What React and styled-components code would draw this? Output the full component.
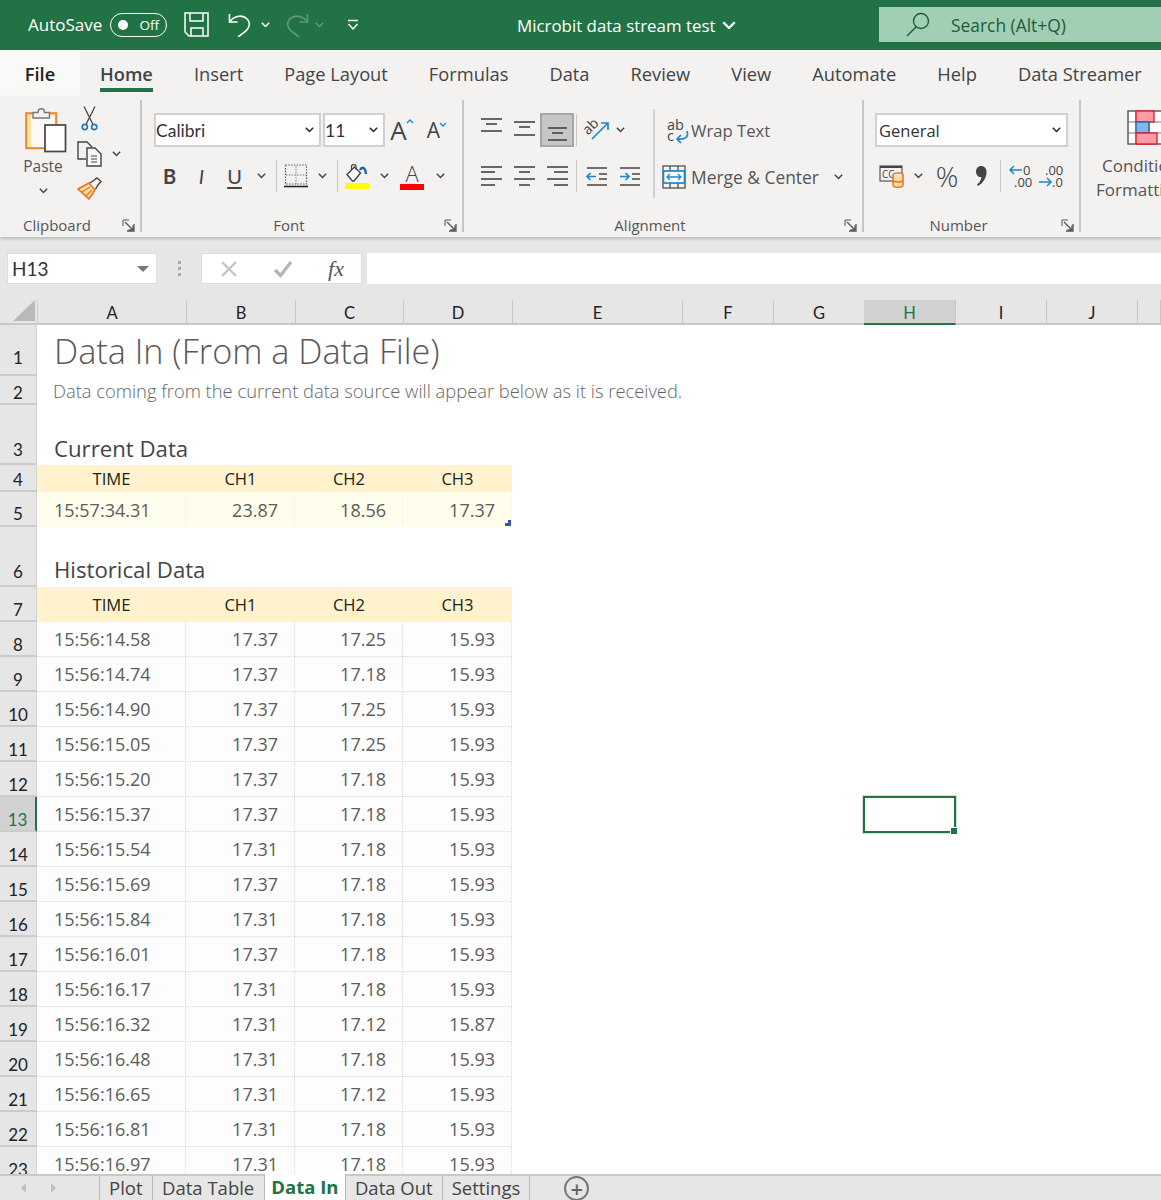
import React from "react";
import styled, { createGlobalStyle } from "styled-components";

const UI = `"Open Sans", "Noto Sans", sans-serif`;
const CALIBRI = `Lato, "Liberation Sans", sans-serif`;
const GREEN = "#217346";

const hist = [
  ["15:56:14.58", "17.37", "17.25", "15.93"],
  ["15:56:14.74", "17.37", "17.18", "15.93"],
  ["15:56:14.90", "17.37", "17.25", "15.93"],
  ["15:56:15.05", "17.37", "17.25", "15.93"],
  ["15:56:15.20", "17.37", "17.18", "15.93"],
  ["15:56:15.37", "17.37", "17.18", "15.93"],
  ["15:56:15.54", "17.31", "17.18", "15.93"],
  ["15:56:15.69", "17.37", "17.18", "15.93"],
  ["15:56:15.84", "17.31", "17.18", "15.93"],
  ["15:56:16.01", "17.37", "17.18", "15.93"],
  ["15:56:16.17", "17.31", "17.18", "15.93"],
  ["15:56:16.32", "17.31", "17.12", "15.87"],
  ["15:56:16.48", "17.31", "17.18", "15.93"],
  ["15:56:16.65", "17.31", "17.12", "15.93"],
  ["15:56:16.81", "17.31", "17.18", "15.93"],
  ["15:56:16.97", "17.31", "17.18", "15.93"],
];

const tabs = ["Insert", "Page Layout", "Formulas", "Data", "Review", "View", "Automate", "Help", "Data Streamer"];
const columns = ["A", "B", "C", "D", "E", "F", "G", "H", "I", "J", ""];
const headers = ["TIME", "CH1", "CH2", "CH3"];

const Chevron = ({ color = "#444", size = 9 }) => (
  <svg width={size} height={size * 0.62} viewBox="0 0 9 5.6">
    <path d="M0.8 0.8 L4.5 4.5 L8.2 0.8" fill="none" stroke={color} strokeWidth="1.5" />
  </svg>
);

const SaveIcon = () => (
  <svg width="25" height="25" viewBox="0 0 25 25" fill="none" stroke="#fff" strokeWidth="1.5">
    <path d="M1 1 H24 V24 H5 L1 20 Z" />
    <path d="M6 1 V9 H19 V1" />
    <path d="M7 24 V16 H19 V24" />
  </svg>
);

const UndoIcon = ({ color = "#fff" }) => (
  <svg width="23" height="25" viewBox="0 0 23 25" fill="none" stroke={color} strokeWidth="1.6">
    <path d="M1.5 2 V10 H9.5" />
    <path d="M1.5 10 C6 4 13 2.5 18 6 C23 10 22 15 18 19 L10 25" />
  </svg>
);

const RedoIcon = ({ color }) => (
  <svg width="23" height="25" viewBox="0 0 23 25" fill="none" stroke={color} strokeWidth="1.6">
    <path d="M21.5 2 V10 H13.5" />
    <path d="M21.5 10 C17 4 10 2.5 5 6 C0 10 1 15 5 19 L13 25" />
  </svg>
);

const CustomizeIcon = () => (
  <svg width="12" height="12" viewBox="0 0 12 12" fill="none" stroke="#fff" strokeWidth="1.5">
    <path d="M1 1.5 H11" />
    <path d="M1.5 5 L6 10 L10.5 5" />
  </svg>
);

const SearchIcon = () => (
  <svg width="24" height="25" viewBox="0 0 24 25" fill="none" stroke="#1d5c3a" strokeWidth="1.4">
    <circle cx="15" cy="9" r="7.5" />
    <path d="M10 15 L1 24" />
  </svg>
);

const PasteIcon = () => (
  <svg width="42" height="46" viewBox="0 0 42 46">
    <rect x="1.2" y="6.2" width="30" height="35" fill="#fbe3a8" stroke="#e68a2e" strokeWidth="2" />
    <rect x="6" y="9" width="24" height="31" fill="#faf9f8" />
    <path d="M8 11 V5.5 H13 C13 0.5 19.5 0.5 19.5 5.5 H24.5 V11 Z" fill="#f3f2f1" stroke="#777" strokeWidth="1.4" />
    <rect x="20" y="18" width="20.5" height="26.5" fill="#fff" stroke="#444" strokeWidth="1.7" />
  </svg>
);

const CutIcon = () => (
  <svg width="17" height="25" viewBox="0 0 17 25" fill="none">
    <path d="M3 0.5 L12 18.5 M14 0.5 L5 18.5" stroke="#444" strokeWidth="1.3" />
    <circle cx="3.8" cy="21" r="2.6" stroke="#1b7cc0" strokeWidth="1.6" />
    <circle cx="13.2" cy="21" r="2.6" stroke="#1b7cc0" strokeWidth="1.6" />
  </svg>
);

const CopyIcon = () => (
  <svg width="25" height="26" viewBox="0 0 25 26" fill="none" stroke="#444" strokeWidth="1.4">
    <path d="M9 18 H1 V1 H10 L15 6" />
    <path d="M10 7 H18 L24 13 V25 H10 Z" fill="#f8f8f8" />
    <path d="M14 15 H20 M14 18 H20 M14 21 H20" strokeWidth="1.1" />
  </svg>
);

const BrushIcon = () => (
  <svg width="25" height="23" viewBox="0 0 25 23" fill="none">
    <path d="M1 12 L12 6 L18 13 L12 22 Z" fill="#fbd9a6" stroke="#e4761c" strokeWidth="1.6" />
    <path d="M5 15 L13 10 M9 19 L15 13" stroke="#e4761c" strokeWidth="1.2" />
    <path d="M13 6 L16 4 L20 1 L24 4.5 L21 8 L18.5 12" fill="#f3f2f1" stroke="#444" strokeWidth="1.4" />
  </svg>
);

const BordersIcon = () => (
  <svg width="24" height="24" viewBox="0 0 24 24" fill="none">
    <rect x="1.5" y="1" width="21" height="19" stroke="#555" strokeWidth="1.2" strokeDasharray="1.4 1.4" />
    <path d="M12 2 V20 M2 11 H22" stroke="#777" strokeWidth="1" strokeDasharray="1.4 1.4" />
    <path d="M0 22.5 H24" stroke="#222" strokeWidth="1.6" />
  </svg>
);

const BucketIcon = () => (
  <svg width="24" height="18" viewBox="0 0 24 18" fill="none">
    <path d="M2 10.5 L9.5 3 L15.5 9 L9 17 H7.5 Z" fill="#fff" stroke="#444" strokeWidth="1.4" />
    <path d="M6.5 6 V2.5 C6.5 0 11 0 11 2.5 V6" stroke="#444" strokeWidth="1.2" />
    <path d="M15 6 C17 2.5 20.5 3 21 10" stroke="#1b63ab" strokeWidth="2.4" />
  </svg>
);

const Lines = ({ rows }) => (
  <svg width="24" height="24" viewBox="0 0 24 24" stroke="#444" strokeWidth="1.6">
    {rows.map(([x1, x2, y]) => (
      <path key={`${x1}-${y}`} d={`M${x1} ${y} H${x2}`} />
    ))}
  </svg>
);

const OrientIcon = () => (
  <svg width="26" height="24" viewBox="0 0 26 24" fill="none" overflow="visible">
    <text x="7" y="13" textAnchor="middle" transform="rotate(-45 7 9)" fontSize="14" fontFamily={UI} fill="#444">ab</text>
    <path d="M8 21 L24 5 M17 5 H24 V12" stroke="#1b87d0" strokeWidth="1.7" />
  </svg>
);

const IndentIcon = ({ flip }) => (
  <svg width="24" height="24" viewBox="0 0 24 24" fill="none">
    <path d="M2 4 H22 M2 21 H22" stroke="#444" strokeWidth="1.6" />
    <path d="M14 10 H22 M14 15 H22" stroke="#444" strokeWidth="1.6" />
    {flip ? (
      <path d="M2 12.5 H11 M7.5 9 L11 12.5 L7.5 16" stroke="#1b87d0" strokeWidth="1.7" />
    ) : (
      <path d="M11 12.5 H2 M5.5 9 L2 12.5 L5.5 16" stroke="#1b87d0" strokeWidth="1.7" />
    )}
  </svg>
);

const WrapIcon = () => (
  <svg width="24" height="26" viewBox="0 0 24 26" fill="none" overflow="visible">
    <text x="0" y="13" fontSize="14.5" fontFamily={UI} fill="#444">ab</text>
    <text x="0" y="24" fontSize="14.5" fontFamily={UI} fill="#444">c</text>
    <path d="M20 14 C22 20 18 23 10 22 M14 18 L10 22 L14 26" stroke="#1b87d0" strokeWidth="1.7" />
  </svg>
);

const MergeIcon = () => (
  <svg width="24" height="24" viewBox="0 0 24 24" fill="none">
    <rect x="1" y="1" width="22" height="22" stroke="#444" strokeWidth="1.2" />
    <path d="M8 1 V6 M16 1 V6 M8 18 V23 M16 18 V23" stroke="#444" strokeWidth="1.2" />
    <rect x="1.5" y="6" width="21" height="12" fill="#fff" stroke="#1b87d0" strokeWidth="1.7" />
    <path d="M5 12 H19 M8 9 L5 12 L8 15 M16 9 L19 12 L16 15" stroke="#1b87d0" strokeWidth="1.3" />
  </svg>
);

const CurrencyIcon = () => (
  <svg width="26" height="24" viewBox="0 0 26 24" fill="none">
    <rect x="1" y="2" width="22" height="15" fill="#f3f2f1" stroke="#555" strokeWidth="1.2" />
    <path d="M1 3 H23" stroke="#444" strokeWidth="2" />
    <text x="3" y="14" fontSize="10" fontFamily={UI} fill="#444">CC</text>
    <ellipse cx="19" cy="11" rx="5" ry="2" fill="#f3f2f1" stroke="#e4761c" strokeWidth="1.5" />
    <path d="M14 11 V21 C14 24 24 24 24 21 V11 M14 16 C14 18.5 24 18.5 24 16" fill="#fbd9a6" stroke="#e4761c" strokeWidth="1.5" />
  </svg>
);

const CommaIcon = () => (
  <svg width="12" height="22" viewBox="0 0 12 22">
    <path d="M6 1 C9.5 1 11.5 3.5 11.5 7 C11.5 13 8 18 3 21 L2 19.5 C4.5 17.5 6 15 6.5 12 C3.5 12.5 1 10 1 6.5 C1 3.5 3 1 6 1 Z" fill="#444" />
  </svg>
);

const DecimalIcon = ({ more }) => (
  <svg width="24" height="24" viewBox="0 0 24 24" fill="none" overflow="visible">
    <text x={more ? 6 : 14} y="11" fontSize="13" fontFamily={UI} fill="#444">{more ? ".00" : "0"}</text>
    <text x={more ? 13 : 5} y="23" fontSize="13" fontFamily={UI} fill="#444">{more ? ".0" : ".00"}</text>
    {more ? (
      <path d="M0 18 H12 M8 14 L12 18 L8 22" stroke="#1b87d0" strokeWidth="1.5" />
    ) : (
      <path d="M13 6 H1 M5 2 L1 6 L5 10" stroke="#1b87d0" strokeWidth="1.5" />
    )}
  </svg>
);

const CondFormatIcon = () => (
  <svg width="36" height="36" viewBox="0 0 36 36" fill="none">
    <rect x="1" y="1" width="34" height="33" fill="#fff" stroke="#555" strokeWidth="1.4" />
    <path d="M1 12 H35 M1 23 H35 M9 1 V34 M22 1 V34" stroke="#777" strokeWidth="1" />
    <rect x="9" y="1" width="18" height="11" fill="#ff9aa6" stroke="#e81123" strokeWidth="1.3" />
    <rect x="9" y="12" width="13" height="11" fill="#7fb9ea" stroke="#1b63ab" strokeWidth="1.3" />
    <rect x="9" y="23" width="21" height="11" fill="#ff9aa6" stroke="#e81123" strokeWidth="1.3" />
  </svg>
);

const LauncherIcon = () => (
  <svg width="13" height="13" viewBox="0 0 13 13" fill="none" stroke="#555" strokeWidth="1.3">
    <path d="M12 5 V12 H5" />
    <path d="M7 1 H1 V7" strokeWidth="1" />
    <path d="M3 3 L11 11 M6.5 11 H11 V6.5" />
  </svg>
);

const NameArrow = styled.span`
  width: 0;
  height: 0;
  border-left: 6px solid transparent;
  border-right: 6px solid transparent;
  border-top: 6px solid #777;
`;

const GlobalStyle = createGlobalStyle`
  html, body { margin: 0; padding: 0; background: #fff; }
  body { font-family: ${UI}; }
  #root { width: 1161px; height: 1200px; }
`;

const Page = styled.div`
  width: 1161px;
  height: 1200px;
  overflow: hidden;
  display: flex;
  flex-direction: column;
  background: #fff;
`;

const TitleBar = styled.header`
  flex: 0 0 50px;
  display: flex;
  align-items: center;
  background: ${GREEN};
  color: #fff;
  padding-left: 28px;
  border-bottom: 1px solid #1d6a40;
  box-sizing: border-box;
`;

const AutoSave = styled.span`
  font-size: 17px;
  width: 82px;
`;

const Toggle = styled.span`
  width: 57px;
  height: 24px;
  box-sizing: border-box;
  border: 1.5px solid #fff;
  border-radius: 12px;
  display: flex;
  align-items: center;
  justify-content: space-between;
  padding: 0 7px 0 7px;
  font-size: 13.5px;
  margin-right: 17px;
  &::before {
    content: "";
    width: 10px;
    height: 10px;
    border-radius: 50%;
    background: #fff;
  }
`;

const BarSlot = styled.span`
  display: flex;
  align-items: center;
  justify-content: center;
  width: ${(p) => p.$w}px;
  margin-left: ${(p) => p.$ml || 0}px;
`;

const DocTitle = styled.span`
  display: flex;
  align-items: center;
  gap: 6px;
  font-size: 16.9px;
  margin-left: 156px;
  padding-top: 1px;
`;

const SearchBox = styled.div`
  width: 282px;
  height: 35px;
  margin-left: auto;
  display: flex;
  align-items: center;
  gap: 21px;
  padding-left: 27px;
  box-sizing: border-box;
  background: #a0cfb4;
  color: #1d5c3a;
  font-size: 17.4px;
`;

const TabRow = styled.nav`
  flex: 0 0 46px;
  display: flex;
  background: #f3f2f1;
  border-top: 1px solid #fff;
  box-sizing: border-box;
  font-size: 18.3px;
  color: #444;
`;

const FileTab = styled.span`
  width: 80px;
  display: flex;
  align-items: center;
  justify-content: center;
  font-weight: 600;
  color: #222;
  background: #f9f9f8;
  margin-right: 20px;
`;

const TabList = styled.div`
  display: flex;
  gap: 41px;
`;

const Tab = styled.span`
  display: flex;
  align-items: center;
  white-space: nowrap;
  box-sizing: border-box;
  height: 41px;
  font-weight: ${(p) => (p.$active ? 600 : 400)};
  border-bottom: ${(p) => (p.$active ? `4px solid ${GREEN}` : "none")};
  padding-top: ${(p) => (p.$active ? "7px" : "3px")};
`;

const Ribbon = styled.section`
  flex: 0 0 141px;
  display: flex;
  background: #f3f2f1;
  padding-top: 4px;
  box-sizing: border-box;
  overflow: hidden;
  box-shadow: 0 2px 3px rgba(0, 0, 0, 0.18);
  position: relative;
  color: #444;
`;

const Group = styled.div`
  flex: 0 0 ${(p) => p.$w}px;
  min-width: 0;
  box-sizing: border-box;
  height: 132px;
  display: flex;
  flex-direction: column;
  border-right: ${(p) => (p.$last ? "none" : "2px solid #c8c6c4")};
`;

const GroupBody = styled.div`
  flex: 0 0 112px;
  box-sizing: border-box;
  padding: 13px 0 0 ${(p) => p.$pl || 0}px;
  display: flex;
  flex-direction: ${(p) => (p.$row ? "row" : "column")};
  gap: 12px;
`;

const GroupFoot = styled.div`
  display: flex;
  align-items: center;
  flex: 0 0 26px;
  font-size: 15px;
  color: #555;
`;

const GroupLabel = styled.span`
  flex: 1;
  text-align: center;
`;

const Launcher = styled.span`
  width: 26px;
  display: flex;
  justify-content: flex-start;
  padding-left: 8px;
  box-sizing: border-box;
`;

const PasteCol = styled.div`
  width: 70px;
  margin-top: -6px;
  display: flex;
  flex-direction: column;
  align-items: center;
  padding-left: 16px;
  box-sizing: border-box;
  font-size: 15.5px;
  color: #555;
  svg:first-child {
    margin-left: 6px;
  }
`;

const PasteLabel = styled.span`
  margin: 1px 0 10px;
  line-height: 24px;
`;

const SmallCol = styled.div`
  margin-top: -7px;
  display: flex;
  flex-direction: column;
  gap: 10px;
  margin-left: -5px;
`;

const SmallRow = styled.div`
  display: flex;
  align-items: center;
  height: ${(p) => p.$h}px;
`;

const ToolRow = styled.div`
  display: flex;
  align-items: center;
  height: 34px;
`;

const Slot = styled.span`
  flex: 0 0 ${(p) => p.$w}px;
  height: 34px;
  margin-left: ${(p) => p.$ml || 0}px;
  display: flex;
  align-items: center;
  justify-content: center;
  box-sizing: border-box;
  background: ${(p) => (p.$on ? "#c8c6c4" : "transparent")};
  border: ${(p) => (p.$on ? "2px solid #a6a6a6" : "none")};
`;

const Sep = styled.span`
  flex: 0 0 1px;
  height: 32px;
  background: #c8c6c4;
  margin: 0 ${(p) => p.$m || 7}px;
`;

const Select = styled.div`
  width: ${(p) => p.$w}px;
  height: 34px;
  box-sizing: border-box;
  margin-right: ${(p) => p.$mr || 0}px;
  background: #fff;
  border: 2px solid #d2d0ce;
  display: flex;
  align-items: center;
  justify-content: space-between;
  padding: 0 5px 0 ${(p) => (p.$ui ? 2 : 0)}px;
  font-family: ${(p) => (p.$ui ? UI : CALIBRI)};
  font-size: ${(p) => (p.$ui ? 16.5 : 17.5)}px;
  color: #333;
`;

const SizeLetter = styled.span`
  position: relative;
  font-size: ${(p) => p.$size}px;
  line-height: 1;
  color: #444;
  padding-right: 7px;
  svg {
    position: absolute;
    top: 2px;
    right: 0;
  }
`;

const FontLetter = styled.span`
  font-size: 20px;
  color: #444;
  font-family: ${CALIBRI};
  font-weight: ${(p) => (p.$bold ? 700 : 400)};
  font-style: ${(p) => (p.$italic ? "italic" : "normal")};
  text-decoration: ${(p) => (p.$under ? "underline" : "none")};
  text-underline-offset: 3px;
`;

const ColorTool = styled.span`
  width: 24px;
  display: flex;
  flex-direction: column;
  align-items: center;
  font-size: 22px;
  font-weight: 300;
  line-height: 20px;
  color: #444;
  &::after {
    content: "";
    width: 24px;
    height: 6px;
    margin-top: 1px;
    background: ${(p) => p.$bar};
  }
`;

const WideTool = styled.span`
  display: flex;
  align-items: center;
  gap: ${(p) => p.$gap}px;
  margin-left: ${(p) => p.$ml || 0}px;
  font-size: ${(p) => p.$size}px;
  color: #555;
  white-space: nowrap;
`;

const MergeChevron = styled.span`
  margin-left: 10px;
  display: flex;
`;

const AlignLeft = styled.div`
  display: flex;
  flex-direction: column;
  gap: 12px;
  width: 167px;
`;

const AlignDivider = styled.span`
  flex: 0 0 2px;
  height: 89px;
  margin-top: -4px;
  background: #d2d0ce;
`;

const AlignRight = styled.div`
  display: flex;
  flex-direction: column;
  gap: 13px;
`;

const Percent = styled.span`
  font-size: 28px;
  font-weight: 300;
  color: #444;
`;

const StylesCol = styled.div`
  padding: 10px 0 0 46px;
  font-size: 17px;
  line-height: 24px;
  color: #555;
`;

const StyleText = styled.div`
  margin: ${(p) => p.$mt}px 0 0 ${(p) => p.$ml}px;
  white-space: nowrap;
`;

const FormulaBar = styled.div`
  flex: 0 0 63px;
  box-sizing: border-box;
  display: flex;
  align-items: flex-start;
  padding: 16px 0 0 7px;
  background: #e6e6e6;
`;

const NameBox = styled.div`
  width: 150px;
  height: 31px;
  box-sizing: border-box;
  background: #fff;
  border: 1px solid #dcdcdc;
  display: flex;
  align-items: center;
  justify-content: space-between;
  padding: 0 7px 0 4px;
  font-family: ${CALIBRI};
  font-size: 19px;
  color: #333;
`;

const Grip = styled.span`
  width: 44px;
  height: 31px;
  display: flex;
  flex-direction: column;
  align-items: center;
  justify-content: center;
  gap: 3px;
  i {
    width: 3px;
    height: 3px;
    background: #aaa;
  }
`;

const FxBox = styled.div`
  width: 161px;
  height: 31px;
  box-sizing: border-box;
  background: #fff;
  border: 1px solid #dcdcdc;
  display: grid;
  grid-template-columns: 54px 53px 54px;
  align-items: center;
  justify-items: center;
  margin-right: 5px;
`;

const FxMark = styled.span`
  font-family: "Liberation Serif", serif;
  font-style: italic;
  font-size: 22px;
  color: #555;
`;

const FormulaInput = styled.div`
  flex: 1;
  height: 31px;
  background: #fff;
`;

const SHEET_COLS = "37px 149px 109px 108px 109px 170px 91px 91px 91px 91px 91px 1fr";
const HEADER_COLS = "38px 149px 109px 108px 109px 170px 91px 91px 91px 91px 91px 1fr";

const ColHeader = styled.div`
  flex: 0 0 25px;
  min-height: 0;
  display: grid;
  grid-template-columns: ${HEADER_COLS};
  grid-template-rows: 25px;
  background: #e6e6e6;
`;

const Corner = styled.div`
  display: flex;
  justify-content: flex-end;
  align-items: flex-end;
  padding: 0 2px 2px 0;
  box-sizing: border-box;
  height: 25px;
  border-right: 1px solid #cfcfcf;
  border-bottom: 2px solid #c8c8c8;
`;

const ColCell = styled.div`
  display: flex;
  align-items: center;
  justify-content: center;
  box-sizing: border-box;
  height: 25px;
  padding-top: 3px;
  margin-left: ${(p) => (p.$sel ? "-1px" : "0")};
  font-family: ${CALIBRI};
  font-size: 16.5px;
  color: ${(p) => (p.$sel ? GREEN : "#222")};
  background: ${(p) => (p.$sel ? "#d2d2d2" : "transparent")};
  border-right: 1px solid #c6c6c6;
  border-bottom: 2px solid ${(p) => (p.$sel ? GREEN : "#c8c8c8")};
`;

const Sheet = styled.main`
  flex: 1;
  min-height: 0;
  overflow: hidden;
`;

const Row = styled.div`
  display: grid;
  grid-template-columns: ${SHEET_COLS};
  height: ${(p) => p.$h}px;
`;

const RowNum = styled.div`
  display: flex;
  align-items: flex-end;
  justify-content: center;
  box-sizing: border-box;
  padding-bottom: ${(p) => p.$pb}px;
  line-height: 20px;
  font-family: ${CALIBRI};
  font-size: 17px;
  background: ${(p) => (p.$sel ? "#d2d2d2" : "#e6e6e6")};
  color: ${(p) => (p.$sel ? GREEN : "#222")};
  border-bottom: 2px solid #cbcbcb;
  border-right: ${(p) => (p.$sel ? `2px solid ${GREEN}` : "1px solid #d4d4d4")};
`;

const Title = styled.div`
  grid-column: 2 / -1;
  padding-left: 17px;
  font-size: 34.2px;
  font-weight: 300;
  color: #595959;
  display: flex;
  align-items: center;
  white-space: nowrap;
`;

const Subtitle = styled.div`
  grid-column: 2 / -1;
  padding-left: 16px;
  font-size: 18.35px;
  font-weight: 300;
  color: #666;
  display: flex;
  align-items: center;
  white-space: nowrap;
`;

const SectionTitle = styled.div`
  grid-column: 2 / -1;
  padding-left: 17px;
  font-size: 22.2px;
  color: #444;
  display: flex;
  align-items: flex-end;
  padding-bottom: ${(p) => p.$pb}px;
  line-height: 30px;
`;

const HeadCell = styled.div`
  background: #fff2cc;
  display: flex;
  align-items: center;
  justify-content: center;
  font-size: 16.6px;
  color: #222;
`;

const DataCell = styled.div`
  position: relative;
  display: flex;
  align-items: center;
  box-sizing: border-box;
  justify-content: ${(p) => (p.$first ? "flex-start" : "flex-end")};
  padding: ${(p) => (p.$first ? "0 0 0 17px" : "0 16px 0 0")};
  font-size: 18px;
  font-weight: 400;
  color: #5c5c5c;
  background: ${(p) => (p.$current ? "#fffdeb" : "#fdfdfd")};
  border-right: 1px dotted ${(p) => (p.$current ? "#f3efd6" : "#d9d9d9")};
  border-bottom: ${(p) => (p.$current ? "none" : "1px dotted #d9d9d9")};
`;

const TableHandle = styled.span`
  position: absolute;
  right: 0;
  bottom: 1px;
  width: 6px;
  height: 6px;
  background: #3f51a5;
  clip-path: polygon(100% 0, 100% 100%, 0 100%, 0 50%, 50% 50%, 50% 0);
`;

const SelectedCell = styled.div`
  grid-column: 9;
  position: relative;
  margin: -1px -1px -1px -1px;
  border: 2px solid ${GREEN};
  box-shadow: 0 0 0 1px #cfe3d8;
`;

const FillHandle = styled.span`
  position: absolute;
  right: -3px;
  bottom: -3px;
  width: 6px;
  height: 6px;
  background: ${GREEN};
  border-left: 1px solid #fff;
  border-top: 1px solid #fff;
`;

const SheetTabs = styled.footer`
  flex: 0 0 26px;
  height: 26px;
  min-height: 0;
  box-sizing: border-box;
  display: flex;
  align-items: stretch;
  background: #e6e6e6;
  border-top: 2px solid #c8c8c8;
  font-size: 18.5px;
  color: #444;
`;

const TabNav = styled.div`
  width: 100px;
  display: flex;
  align-items: center;
  gap: 25px;
  padding-left: 21px;
  box-sizing: border-box;
  border-right: 1px solid #b8b8b8;
  i {
    width: 0;
    height: 0;
    border-top: 5px solid transparent;
    border-bottom: 5px solid transparent;
  }
  i:first-child {
    border-right: 5px solid #c0c0c0;
  }
  i:last-child {
    border-left: 5px solid #c0c0c0;
  }
`;

const SheetTab = styled.span`
  display: flex;
  align-items: center;
  padding: 0 ${(p) => p.$pad}px;
  white-space: nowrap;
  line-height: 1;
  border-right: 1px solid #b8b8b8;
  background: ${(p) => (p.$active ? "#fff" : "transparent")};
  color: ${(p) => (p.$active ? GREEN : "#444")};
  font-weight: ${(p) => (p.$active ? 700 : 400)};
  margin-top: ${(p) => (p.$active ? "-2px" : "0")};
`;

const AddSheet = styled.span`
  margin: 0 0 0 34px;
  flex: 0 0 21px;
  height: 21px;
  border: 2px solid #777;
  border-radius: 50%;
  display: flex;
  align-items: center;
  justify-content: center;
  box-sizing: content-box;
  align-self: center;
  color: #666;
  font-size: 22px;
  line-height: 1;
  font-weight: 600;
`;

const DataRow = ({ num, values, selected, current, handle, pb = 0 }) => (
  <Row $h={35}>
    <RowNum $pb={pb} $sel={selected}>{num}</RowNum>
    {values.map((v, i) => (
      <DataCell key={i} $first={i === 0} $current={current}>
        {v}
        {handle && i === 3 && <TableHandle />}
      </DataCell>
    ))}
    {selected && (
      <SelectedCell>
        <FillHandle />
      </SelectedCell>
    )}
  </Row>
);

const HeaderRow = ({ num, h }) => (
  <Row $h={h}>
    <RowNum $pb={0}>{num}</RowNum>
    {headers.map((t) => (
      <HeadCell key={t}>{t}</HeadCell>
    ))}
  </Row>
);

const App = () => {
  return (
    <Page>
      <GlobalStyle />
      <TitleBar>
        <AutoSave>AutoSave</AutoSave>
        <Toggle>Off</Toggle>
        <BarSlot $w={25}><SaveIcon /></BarSlot>
        <BarSlot $w={23} $ml={19}><UndoIcon /></BarSlot>
        <BarSlot $w={16} $ml={6}><Chevron color="#fff" /></BarSlot>
        <BarSlot $w={23} $ml={13}><RedoIcon color="#5f9c7b" /></BarSlot>
        <BarSlot $w={16} $ml={2}><Chevron color="#5f9c7b" /></BarSlot>
        <BarSlot $w={16} $ml={18}><CustomizeIcon /></BarSlot>
        <DocTitle>
          Microbit data stream test
          <Chevron color="#fff" size={14} />
        </DocTitle>
        <SearchBox>
          <SearchIcon />
          Search (Alt+Q)
        </SearchBox>
      </TitleBar>

      <TabRow>
        <FileTab>File</FileTab>
        <TabList>
          <Tab $active>Home</Tab>
          {tabs.map((t) => (
            <Tab key={t}>{t}</Tab>
          ))}
        </TabList>
      </TabRow>

      <Ribbon>
        <Group $w={142}>
          <GroupBody $row>
            <PasteCol>
              <PasteIcon />
              <PasteLabel>Paste</PasteLabel>
              <Chevron />
            </PasteCol>
            <SmallCol>
              <SmallRow $h={25}><Slot $w={24}><CutIcon /></Slot></SmallRow>
              <SmallRow $h={26}>
                <Slot $w={24}><CopyIcon /></Slot>
                <Slot $w={28}><Chevron /></Slot>
              </SmallRow>
              <SmallRow $h={23}><Slot $w={24}><BrushIcon /></Slot></SmallRow>
            </SmallCol>
          </GroupBody>
          <GroupFoot>
            <GroupLabel>Clipboard</GroupLabel>
            <Launcher><LauncherIcon /></Launcher>
          </GroupFoot>
        </Group>

        <Group $w={322}>
          <GroupBody $pl={12}>
            <ToolRow>
              <Select $w={167} $mr={2}>Calibri<Chevron color="#222" /></Select>
              <Select $w={62}>11<Chevron color="#222" /></Select>
              <Slot $w={32} $ml={1}>
                <SizeLetter $size={26}>A<svg width="8" height="5" viewBox="0 0 8 5"><path d="M1 4 L4 1 L7 4" fill="none" stroke="#1b87d0" strokeWidth="1.4" /></svg></SizeLetter>
              </Slot>
              <Slot $w={32} $ml={3}>
                <SizeLetter $size={21}>A<svg width="8" height="5" viewBox="0 0 8 5"><path d="M1 1 L4 4 L7 1" fill="none" stroke="#1b87d0" strokeWidth="1.4" /></svg></SizeLetter>
              </Slot>
            </ToolRow>
            <ToolRow>
              <Slot $w={31}><FontLetter $bold>B</FontLetter></Slot>
              <Slot $w={33}><FontLetter $italic>I</FontLetter></Slot>
              <Slot $w={33}><FontLetter $under>U</FontLetter></Slot>
              <Slot $w={21}><Chevron /></Slot>
              <Sep $m={4} />
              <Slot $w={30}><BordersIcon /></Slot>
              <Slot $w={22}><Chevron /></Slot>
              <Sep $m={4} />
              <Slot $w={30}>
                <ColorTool $bar="#ffff00"><BucketIcon /></ColorTool>
              </Slot>
              <Slot $w={24}><Chevron /></Slot>
              <Slot $w={32}>
                <ColorTool $bar="#ff0000">A</ColorTool>
              </Slot>
              <Slot $w={24}><Chevron /></Slot>
            </ToolRow>
          </GroupBody>
          <GroupFoot>
            <GroupLabel>Font</GroupLabel>
            <Launcher><LauncherIcon /></Launcher>
          </GroupFoot>
        </Group>

        <Group $w={400}>
          <GroupBody $row $pl={10}>
            <AlignLeft>
              <ToolRow>
                <Slot $w={33}><Lines rows={[[2, 23, 1], [7, 18, 6], [2, 23, 13]]} /></Slot>
                <Slot $w={33}><Lines rows={[[2, 23, 4], [7, 18, 9], [2, 23, 17]]} /></Slot>
                <Slot $w={34} $on><Lines rows={[[3, 22, 10], [7, 18, 15], [3, 22, 22]]} /></Slot>
                <Sep $m={2} />
                <Slot $w={36}><OrientIcon /></Slot>
                <Slot $w={10}><Chevron /></Slot>
              </ToolRow>
              <ToolRow>
                <Slot $w={33}><Lines rows={[[2, 23, 3], [2, 16, 8], [2, 23, 15], [2, 16, 21]]} /></Slot>
                <Slot $w={33}><Lines rows={[[2, 23, 3], [7, 18, 8], [2, 23, 15], [7, 18, 21]]} /></Slot>
                <Slot $w={34}><Lines rows={[[2, 23, 3], [9, 23, 8], [2, 23, 15], [9, 23, 21]]} /></Slot>
                <Sep $m={2} />
                <Slot $w={36}><IndentIcon /></Slot>
                <Slot $w={30}><IndentIcon flip /></Slot>
              </ToolRow>
            </AlignLeft>
            <AlignDivider />
            <AlignRight>
              <ToolRow>
                <WideTool $gap={0} $size={16.7}><WrapIcon />Wrap Text</WideTool>
              </ToolRow>
              <ToolRow>
                <WideTool $gap={5} $ml={-5} $size={17.4}>
                  <MergeIcon />Merge &amp; Center
                  <MergeChevron><Chevron /></MergeChevron>
                </WideTool>
              </ToolRow>
            </AlignRight>
          </GroupBody>
          <GroupFoot>
            <GroupLabel>Alignment</GroupLabel>
            <Launcher><LauncherIcon /></Launcher>
          </GroupFoot>
        </Group>

        <Group $w={217}>
          <GroupBody $pl={11}>
            <ToolRow>
              <Select $w={193} $ui>General<Chevron color="#222" /></Select>
            </ToolRow>
            <ToolRow>
              <Slot $w={34}><CurrencyIcon /></Slot>
              <Slot $w={18}><Chevron /></Slot>
              <Slot $w={40}><Percent>%</Percent></Slot>
              <Slot $w={28}><CommaIcon /></Slot>
              <Sep $m={5} />
              <Slot $w={3} />
              <Slot $w={24}><DecimalIcon /></Slot>
              <Slot $w={6} />
              <Slot $w={24}><DecimalIcon more /></Slot>
            </ToolRow>
          </GroupBody>
          <GroupFoot>
            <GroupLabel>Number</GroupLabel>
            <Launcher><LauncherIcon /></Launcher>
          </GroupFoot>
        </Group>

        <Group $w={100} $last>
          <StylesCol>
            <CondFormatIcon />
            <StyleText $mt={2} $ml={-25}>Conditional</StyleText>
            <StyleText $mt={0} $ml={-31}>Formatting</StyleText>
          </StylesCol>
        </Group>
      </Ribbon>

      <FormulaBar>
        <NameBox>H13<NameArrow /></NameBox>
        <Grip><i /><i /><i /></Grip>
        <FxBox>
          <svg width="18" height="18" viewBox="0 0 18 18"><path d="M2 2 L16 16 M16 2 L2 16" stroke="#c4c4c4" strokeWidth="2.4" /></svg>
          <svg width="20" height="18" viewBox="0 0 20 18"><path d="M2 10 L7.5 15.5 L18 2" fill="none" stroke="#b4b4b4" strokeWidth="3.2" /></svg>
          <FxMark>fx</FxMark>
        </FxBox>
        <FormulaInput />
      </FormulaBar>

      <ColHeader>
        <Corner>
          <svg width="22" height="21" viewBox="0 0 22 21"><path d="M22 0 V21 H0 Z" fill="#b9b9b9" /></svg>
        </Corner>
        {columns.map((c) => (
          <ColCell key={c || "k"} $sel={c === "H"}>{c}</ColCell>
        ))}
      </ColHeader>

      <Sheet>
        <Row $h={51}>
          <RowNum $pb={6}>1</RowNum>
          <Title>Data In (From a Data File)</Title>
        </Row>
        <Row $h={29}>
          <RowNum $pb={0}>2</RowNum>
          <Subtitle>Data coming from the current data source will appear below as it is received.</Subtitle>
        </Row>
        <Row $h={60}>
          <RowNum $pb={3}>3</RowNum>
          <SectionTitle $pb={1}>Current Data</SectionTitle>
        </Row>
        <HeaderRow num={4} h={27} />
        <DataRow num={5} values={["15:57:34.31", "23.87", "18.56", "17.37"]} current handle pb={1} />
        <Row $h={60}>
          <RowNum $pb={3}>6</RowNum>
          <SectionTitle $pb={2}>Historical Data</SectionTitle>
        </Row>
        <HeaderRow num={7} h={35} />
        {hist.map((values, i) => (
          <DataRow key={i} num={i + 8} values={values} selected={i + 8 === 13} />
        ))}
      </Sheet>

      <SheetTabs>
        <TabNav><i /><i /></TabNav>
        <SheetTab $pad={9}>Plot</SheetTab>
        <SheetTab $pad={9.5}>Data Table</SheetTab>
        <SheetTab $pad={6.5} $active>Data In</SheetTab>
        <SheetTab $pad={9}>Data Out</SheetTab>
        <SheetTab $pad={9}>Settings</SheetTab>
        <AddSheet>+</AddSheet>
      </SheetTabs>
    </Page>
  );
};

export default App;
